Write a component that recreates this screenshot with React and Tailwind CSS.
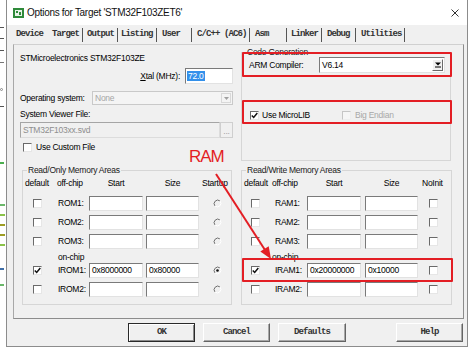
import React from "react";

const Check = ({ checked = false, disabled = false }) =>
  disabled ? (
    <div className="w-[9px] h-[9px] shrink-0 bg-[#f6f6f6] border border-t-[#c6c6c6] border-l-[#c6c6c6] border-r-[#eeeeee] border-b-[#eeeeee]" />
  ) : (
    <div className="w-[9px] h-[9px] shrink-0 bg-white border border-t-[#6a6a6a] border-l-[#6a6a6a] border-r-[#e6e6e6] border-b-[#e6e6e6] flex items-center justify-center">
      {checked && (
        <svg width="7" height="7" viewBox="0 0 7 7">
          <path d="M0.8 3.4 L2.7 5.4 L6.3 1.1" stroke="#111" strokeWidth="1.5" fill="none" />
        </svg>
      )}
    </div>
  );

const Radio = ({ checked = false }) => (
  <svg width="9" height="9" viewBox="0 0 9 9" className="shrink-0">
    <path d="M2.03 6.97 A3.5 3.5 0 0 1 6.97 2.03" stroke="#707070" strokeWidth="1" fill="none" />
    <path d="M6.97 2.03 A3.5 3.5 0 0 1 2.03 6.97" stroke="#ffffff" strokeWidth="1" fill="none" />
    {checked && <circle cx="4.5" cy="4.5" r="1.3" fill="#111" />}
  </svg>
);

const Field = ({ className = "", children }) => (
  <div
    className={
      "h-[15px] shrink-0 bg-white border border-t-[#7a7a7a] border-l-[#7a7a7a] border-r-[#e2e2e2] border-b-[#e2e2e2] flex items-center pl-[2px] leading-none text-black " +
      className
    }
  >
    {children}
  </div>
);

const LEFT = {
  c1: "w-[30px] shrink-0",
  c1cb: "w-[30px] shrink-0 pl-[10px] flex items-center",
  c2: "w-[36px] shrink-0",
  c2lab: "w-[36px] shrink-0 pl-[5px]",
  c2head: "w-[36px] shrink-0 pl-[4px]",
  c2on: "w-[36px] shrink-0 pl-[5px]",
  gap: "w-[3px] shrink-0",
  c5: "w-[32px] shrink-0",
  c5head: "w-[32px] shrink-0 pl-[3px]",
  c5cell: "w-[32px] shrink-0 pl-[14px] flex items-center",
};
const RIGHT = {
  c1: "w-[28px] shrink-0",
  c1cb: "w-[28px] shrink-0 pl-[9px] flex items-center",
  c2: "w-[37px] shrink-0",
  c2lab: "w-[37px] shrink-0 pl-[5px]",
  c2head: "w-[37px] shrink-0 pl-[2px]",
  c2on: "w-[37px] shrink-0 pl-[2px]",
  gap: "w-[4px] shrink-0",
  c5: "w-[33px] shrink-0",
  c5head: "w-[33px] shrink-0 pl-[4px]",
  c5cell: "w-[33px] shrink-0 pl-[11px] flex items-center",
};

function MemArea({ legend, cfg, lastHead, rows, radio, className }) {
  return (
    <div className={"h-[135px] border border-[#d6d6d6] flex flex-col " + className}>
      <div className="-mt-[7px] ml-[4px] h-[12px] leading-[12px] px-[1px] w-fit bg-[#f0f0f0] text-[#1a1a1a]">{legend}</div>
      <div className="mt-[1px] h-[12px] leading-[12px] flex whitespace-nowrap">
        <div className={cfg.c1 + " pl-[2px]"}>default</div>
        <div className={cfg.c2head}>off-chip</div>
        <div className="w-[54px] shrink-0 text-center">Start</div>
        <div className={cfg.gap} />
        <div className="w-[53px] shrink-0 text-center">Size</div>
        <div className={cfg.c5head}>{lastHead}</div>
      </div>
      {rows.map((r, i) =>
        r.onchip ? (
          <div key={i} className="mt-[2px] h-[12px] leading-[12px] flex">
            <div className={cfg.c1} />
            <div className={cfg.c2on}>on-chip</div>
          </div>
        ) : (
          <div key={i} className={(r.first ? "mt-[7px]" : r.after ? "mt-0" : "mt-[4px]") + " h-[15px] flex items-center"}>
            <div className={cfg.c1cb}>
              <Check checked={r.cb} />
            </div>
            <div className={cfg.c2lab}>{r.label}</div>
            <Field className="w-[54px]">{r.start}</Field>
            <div className={cfg.gap} />
            <Field className="w-[53px]">{r.size}</Field>
            <div className={cfg.c5cell}>{radio ? <Radio checked={r.sel} /> : <Check />}</div>
          </div>
        )
      )}
    </div>
  );
}

const tabs = [
  { t: "Device", c: "w-[35px] pl-[3px]", sep: false },
  { t: "Target", c: "w-[35px] pl-[4px]", sep: true },
  { t: "Output", c: "w-[35px] pl-[4px]", sep: true },
  { t: "Listing", c: "w-[39px] pl-[3px]", sep: true },
  { t: "User", c: "w-[35px] pl-[5px]", sep: true },
  { t: "C/C++ (AC6)", c: "w-[58px] pl-[5px]", sep: true },
  { t: "Asm", c: "w-[37px] pl-[5px]", sep: true },
  { t: "Linker", c: "w-[35px] pl-[4px]", sep: true },
  { t: "Debug", c: "w-[34px] pl-[5px]", sep: true },
  { t: "Utilities", c: "w-[49px] pl-[5px]", sep: true },
];

const Btn = ({ className = "", children, def = false }) => (
  <div
    className={
      (def
        ? "border border-[#2a2a2a] shadow-[inset_1px_1px_0_#ffffff,inset_-1px_-1px_0_#8a8a8a] "
        : "border border-t-white border-l-white border-r-[#646464] border-b-[#646464] shadow-[inset_-1px_-1px_0_#a8a8a8] ") +
      "h-[19px] bg-[#f0f0f0] flex items-center justify-center font-['Liberation_Mono',monospace] font-bold text-[9px] tracking-[-0.9px] text-[#333] " +
      className
    }
  >
    {children}
  </div>
);

export default function App() {
  const leftRows = [
    { first: true, cb: false, label: "ROM1:", start: "", size: "", sel: false },
    { cb: false, label: "ROM2:", start: "", size: "", sel: false },
    { cb: false, label: "ROM3:", start: "", size: "", sel: false },
    { onchip: true },
    { after: true, cb: true, label: "IROM1:", start: "0x8000000", size: "0x80000", sel: true },
    { cb: false, label: "IROM2:", start: "", size: "", sel: false },
  ];
  const rightRows = [
    { first: true, cb: false, label: "RAM1:", start: "", size: "" },
    { cb: false, label: "RAM2:", start: "", size: "" },
    { cb: false, label: "RAM3:", start: "", size: "" },
    { onchip: true },
    { after: true, cb: true, label: "IRAM1:", start: "0x20000000", size: "0x10000" },
    { cb: false, label: "IRAM2:", start: "", size: "" },
  ];

  return (
    <div className="w-[474px] h-[352px] bg-white relative overflow-hidden flex font-['Liberation_Sans',Arial,sans-serif] text-[8.5px] tracking-[-0.25px] text-black">
      {/* background window strip */}
      <div className="w-[6px] shrink-0 flex flex-col">
        <div className="mt-[27px] w-[4px] h-px bg-[#555]" />
        <div className="mt-[10px] w-[4px] h-px bg-[#555]" />
        <div className="mt-[11px] w-[4px] h-px bg-[#555]" />
        <div className="mt-[11px] w-[4px] h-px bg-[#777]" />
        <div className="mt-[25px] w-[3px] h-[3px] border border-[#888] rounded-full" />
        <div className="mt-[15px] w-[4px] h-px bg-[#555]" />
        <div className="mt-[55px] w-[4px] h-[2px] bg-[#4caf50]" />
        <div className="mt-[40px] w-[5px] h-[2px] bg-[#6bb86b]" />
        <div className="mt-[8px] w-[5px] h-[2px] bg-[#8bc34a]" />
        <div className="mt-[8px] w-[5px] h-[2px] bg-[#9e9d24]" />
        <div className="mt-[8px] w-[5px] h-[2px] bg-[#9e9d24]" />
        <div className="mt-[8px] w-[5px] h-[2px] bg-[#8bc34a]" />
        <div className="mt-[22px] w-[4px] h-[2px] bg-[#3f6ea8]" />
        <div className="mt-[14px] w-[4px] h-[2px] bg-[#6bb86b]" />
      </div>

      {/* dialog */}
      <div className="w-[462px] h-[347px] shrink-0 flex flex-col border-l border-r border-b border-[#8c8c8c]">
        <div className="h-[25px] bg-white flex items-center pl-[6px] shrink-0">
          <svg width="11" height="10" viewBox="0 0 11 10" className="shrink-0">
            <rect x="0" y="0" width="11" height="10" fill="#2f8a3a" />
            <rect x="2" y="2" width="7" height="6" fill="#e8f4e8" />
            <rect x="3" y="3" width="2" height="2" fill="#2f8a3a" />
            <rect x="6" y="4" width="2" height="3" fill="#2f8a3a" />
          </svg>
          <div className="ml-[3px] text-[10px] tracking-[-0.3px] text-[#111]">Options for Target 'STM32F103ZET6'</div>
          <svg width="8" height="8" viewBox="0 0 8 8" className="ml-auto mr-[8px]">
            <path d="M0.5 0.5 L7.5 7.5 M7.5 0.5 L0.5 7.5" stroke="#333" strokeWidth="1" />
          </svg>
        </div>

        <div className="flex-1 bg-[#f0f0f0] flex flex-col pl-[6px]">
          {/* tabs */}
          <div className="h-[19px] flex font-['Liberation_Mono',monospace] font-bold text-[9px] tracking-[-0.9px] text-[#333]">
            {tabs.map((t) => (
              <div key={t.t} className={t.c + " h-full flex items-center shrink-0 whitespace-pre"}>
                <span>{t.t}</span>
                {t.sep && <div className="ml-auto w-px h-[14px] bg-[#555]" />}
              </div>
            ))}
          </div>

          {/* panel */}
          <div className="w-[451px] h-[275px] border border-t-[#d0d0d0] border-l-[#a8a8a8] border-r-[#8c8c8c] border-b-[#8c8c8c] flex pl-[6px]">
            {/* left column */}
            <div className="w-[213px] shrink-0 flex flex-col">
              <div className="mt-[7px] h-[12px] leading-[12px] whitespace-nowrap">STMicroelectronics STM32F103ZE</div>
              <div className="mt-[4px] h-[16px] flex items-center justify-end">
                <span className="mr-[5px]">
                  <span className="underline">X</span>tal (MHz):
                </span>
                <div className="w-[48px] h-[16px] bg-white border border-t-[#7a7a7a] border-l-[#7a7a7a] border-r-[#e2e2e2] border-b-[#e2e2e2] flex items-center pl-[1px]">
                  <span className="bg-[#3390ea] text-white h-[10px] leading-[10px] px-[1px]">72.0</span>
                </div>
              </div>
              <div className="mt-[7px] h-[14px] flex items-center justify-between">
                <span>Operating system:</span>
                <div className="w-[141px] h-[14px] bg-[#f4f4f4] border border-[#c9c9c9] flex items-center pl-[2px] text-[#a6a6a6]">
                  <span>None</span>
                  <div className="ml-auto w-[10px] h-[10px] mr-px flex items-center justify-center border border-[#d8d8d8]">
                    <svg width="5" height="3" viewBox="0 0 5 3">
                      <path d="M0 0 L5 0 L2.5 3 Z" fill="#a0a0a0" />
                    </svg>
                  </div>
                </div>
              </div>
              <div className="mt-[3px] h-[12px] leading-[12px]">System Viewer File:</div>
              <div className="mt-[2px] h-[16px] flex">
                <div className="w-[200px] h-[16px] bg-[#f0f0f0] border border-t-[#a5a5a5] border-l-[#a5a5a5] border-r-[#dcdcdc] border-b-[#dcdcdc] flex items-center pl-[2px] text-[#8e8e8e]">
                  STM32F103xx.svd
                </div>
                <div className="w-[13px] h-[16px] bg-[#f0f0f0] border border-[#cfcfcf] flex items-end justify-center pb-[2px] text-[#a0a0a0] leading-none">
                  ...
                </div>
              </div>
              <div className="mt-[3px] h-[12px] flex items-center pl-[3px]">
                <Check />
                <span className="ml-[4px]">Use Custom File</span>
              </div>
              <MemArea
                className="mt-[17px] ml-[2px] w-[210px]"
                legend="Read/Only Memory Areas"
                cfg={LEFT}
                lastHead="Startup"
                rows={leftRows}
                radio
              />
            </div>

            {/* right column */}
            <div className="ml-[7px] w-[212px] shrink-0 flex flex-col">
              <div className="mt-[7px] ml-[1px] w-[210px] h-[109px] border border-[#d6d6d6] flex flex-col">
                <div className="-mt-[7px] ml-[4px] h-[12px] leading-[12px] px-[1px] w-fit bg-[#f0f0f0] text-[#1a1a1a]">Code Generation</div>
                <div className="-mt-[1px] h-[16px] flex items-center pl-[7px]">
                  <span>ARM Compiler:</span>
                  <div className="ml-auto mr-[5px] w-[126px] h-[16px] bg-white border border-t-[#7a7a7a] border-l-[#7a7a7a] border-r-[#e2e2e2] border-b-[#e2e2e2] flex items-center pl-[2px]">
                    <span>V6.14</span>
                    <div className="ml-auto mr-px w-[11px] h-[12px] bg-[#f0f0f0] border border-t-white border-l-white border-r-[#6a6a6a] border-b-[#6a6a6a] flex flex-col items-center justify-center">
                      <svg width="6" height="6" viewBox="0 0 6 6">
                        <path d="M0 0.5 L6 0.5 L3 3.5 Z" fill="#000" />
                        <rect x="0" y="4.5" width="6" height="1" fill="#000" />
                      </svg>
                    </div>
                  </div>
                </div>
                <div className="mt-[36px] h-[12px] flex items-center pl-[8px]">
                  <div className="w-[92px] shrink-0 flex items-center">
                    <Check checked />
                    <span className="ml-[3px]">Use MicroLIB</span>
                  </div>
                  <Check disabled />
                  <span className="ml-[4px] text-[#a8a8a8]">Big Endian</span>
                </div>
              </div>
              <MemArea
                className="mt-[9px] ml-[1px] w-[211px]"
                legend="Read/Write Memory Areas"
                cfg={RIGHT}
                lastHead="NoInit"
                rows={rightRows}
                radio={false}
              />
            </div>
          </div>

          {/* buttons */}
          <div className="mt-[4px] h-[19px] flex pl-[115px]">
            <Btn def className="w-[67px]">OK</Btn>
            <Btn className="ml-[8px] w-[67px]">Cancel</Btn>
            <Btn className="ml-[8px] w-[68px]">Defaults</Btn>
            <Btn className="ml-[50px] w-[67px]">Help</Btn>
          </div>
        </div>
      </div>
      <div className="flex-1" />

      {/* annotations */}
      <div className="absolute left-[242px] top-[52px] w-[210px] h-[25px] border-2 border-[#e31e24] rounded-[1px]" />
      <div className="absolute left-[242px] top-[100px] w-[210px] h-[24px] border-2 border-[#e31e24] rounded-[1px]" />
      <div className="absolute left-[242px] top-[258px] w-[211px] h-[24px] border-2 border-[#e31e24] rounded-[1px]" />
      <div className="absolute left-[189px] top-[148px] text-[17px] leading-[17px] tracking-[-1px] text-[#e31e24]">RAM</div>
      <svg className="absolute left-0 top-0 pointer-events-none" width="474" height="352" viewBox="0 0 474 352">
        <line x1="216" y1="174" x2="265" y2="250" stroke="#e31e24" strokeWidth="2" />
        <polygon points="271,259 260.3,251.6 268.7,246.2" fill="#e31e24" />
      </svg>
    </div>
  );
}
